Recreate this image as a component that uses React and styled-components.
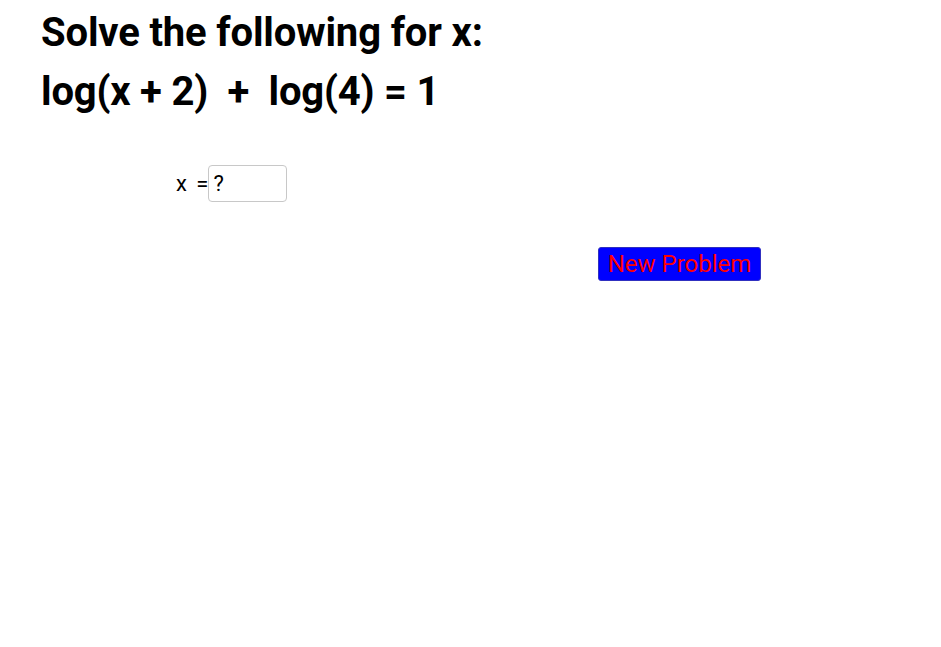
import React from "react";
import styled, { createGlobalStyle } from "styled-components";

const Global = createGlobalStyle`
  html, body {
    margin: 0;
    padding: 0;
    background: #ffffff;
  }
  body {
    font-family: Roboto, "Liberation Sans", sans-serif;
  }
`;

const Page = styled.main`
  width: 941px;
  height: 647px;
  padding: 7px 0 0 41px;
  box-sizing: border-box;
  color: #000000;
`;

const Heading = styled.h1`
  margin: 0;
  font-size: 40px;
  line-height: 52px;
  font-weight: 700;
  letter-spacing: -0.15px;
`;

const Equation = styled.div`
  margin: 7px 0 0 0;
  font-size: 40px;
  line-height: 52px;
  font-weight: 700;
  letter-spacing: -0.2px;
  white-space: pre;
`;

const AnswerRow = styled.div`
  display: flex;
  align-items: center;
  margin: 47px 0 0 135px;
  font-size: 22px;
`;

const Label = styled.span`
  word-spacing: 4px;
`;

const Field = styled.input`
  width: 79px;
  height: 37px;
  box-sizing: border-box;
  border: 1px solid #c8c8c8;
  border-radius: 4px;
  padding: 0 4px;
  font-family: Roboto, "Liberation Sans", sans-serif;
  font-size: 22px;
  color: #000000;
  outline: none;
`;

const ButtonRow = styled.div`
  margin: 45px 0 0 557px;
`;

const NewProblem = styled.button`
  width: 163px;
  height: 34px;
  box-sizing: border-box;
  background: #0000ff;
  color: #ff0000;
  border: 1px solid #3030c0;
  border-radius: 3px;
  font-family: Roboto, "Liberation Sans", sans-serif;
  font-size: 24px;
  line-height: 32px;
  padding: 0;
  cursor: pointer;
`;

export default function App() {
  return (
    <>
      <Global />
      <Page>
        <Heading>Solve the following for x:</Heading>
        <Equation>{"log(x + 2)  +  log(4) = 1"}</Equation>
        <AnswerRow>
          <Label>x =</Label>
          <Field defaultValue="?" />
        </AnswerRow>
        <ButtonRow>
          <NewProblem>New Problem</NewProblem>
        </ButtonRow>
      </Page>
    </>
  );
}
